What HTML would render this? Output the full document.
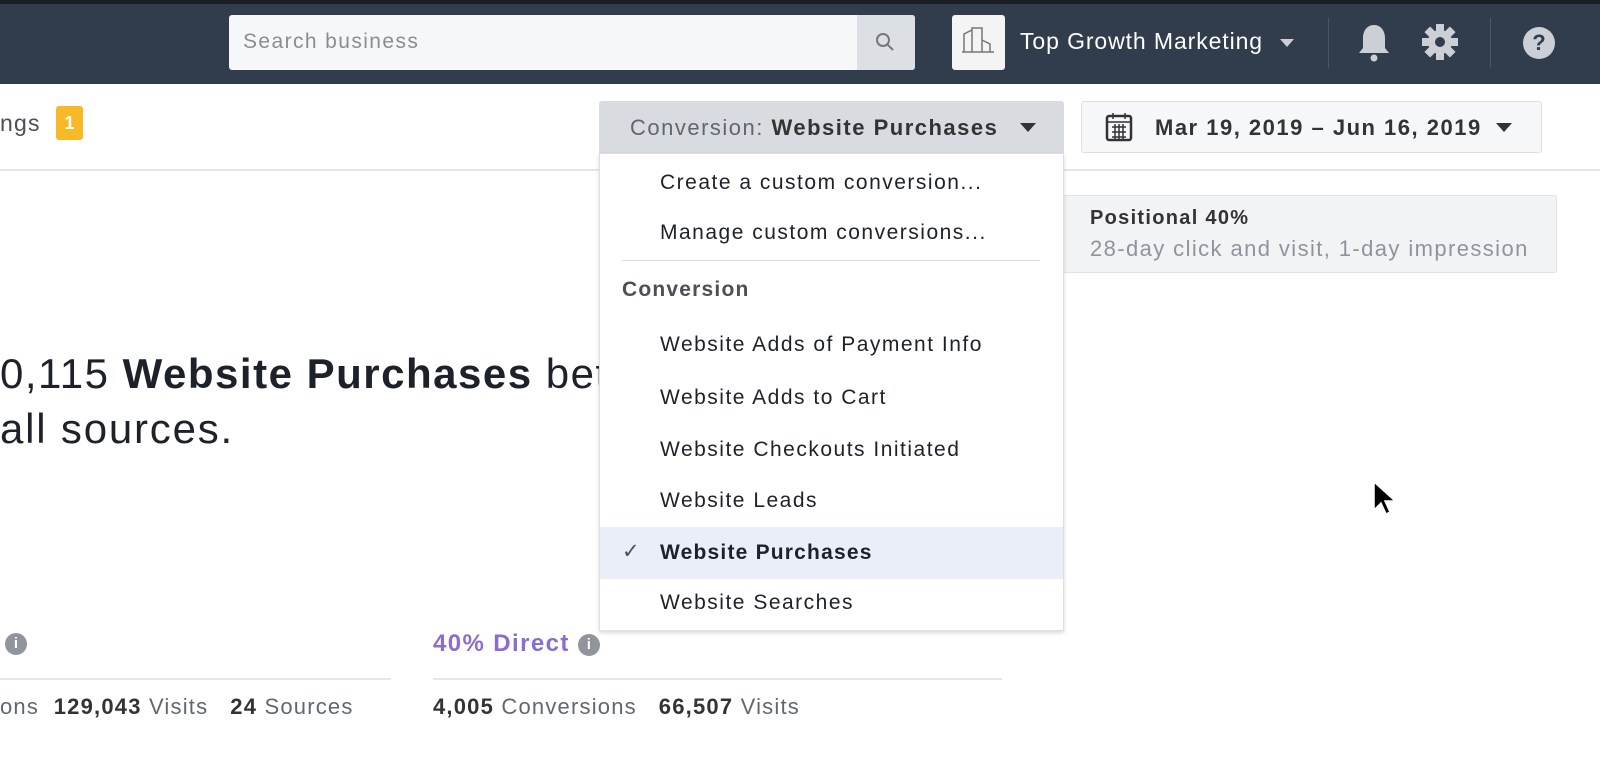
<!DOCTYPE html>
<html><head><style>
*{margin:0;padding:0;box-sizing:border-box}
body{width:1600px;height:781px;overflow:hidden;background:#fff;font-family:"Liberation Sans",sans-serif;position:relative;color:#1d2129;letter-spacing:1.2px}
.abs{position:absolute;white-space:nowrap}
.hdr{left:0;top:0;width:1600px;height:84px;background:#313c4c;border-top:4px solid #1a1f26}
.mi{position:absolute;left:60px;font-size:21px;color:#1d2129;white-space:nowrap;letter-spacing:1.5px}
.ic{display:inline-block;width:22px;height:22px;border-radius:50%;background:#90949c;color:#fff;font-size:15px;font-weight:bold;text-align:center;line-height:22px;letter-spacing:0;vertical-align:2px}
</style></head><body>
<div class="abs hdr"></div>
<div class="abs" style="left:229px;top:15px;width:686px;height:55px;background:#f6f7f9;border-radius:3px"></div>
<div class="abs" style="left:857px;top:15px;width:58px;height:55px;background:#dcdfe4;border-radius:0 3px 3px 0"></div>
<svg class="abs" style="left:874px;top:31px" width="22" height="22"><circle cx="9" cy="9" r="6" stroke="#777" stroke-width="2" fill="none"/><path d="M13 13l6 6" stroke="#777" stroke-width="2"/></svg>
<div class="abs" style="left:243px;top:30px;font-size:21px;color:#8a8d91;letter-spacing:1.4px">Search business</div>
<div class="abs" style="left:952px;top:15px;width:53px;height:55px;background:#f4f4f4;border-radius:3px"></div>
<svg class="abs" style="left:958px;top:22px" width="40" height="40"><path d="M6 30V12l8-4v22M14 30V6h10v24M24 18l8 4v8M4 30h32" stroke="#777" stroke-width="1.5" fill="none"/></svg>
<div class="abs" style="left:1020px;top:28px;font-size:23px;color:#fff;letter-spacing:0.9px">Top Growth Marketing</div>
<div class="abs" style="left:1280px;top:39px;border:7px solid transparent;border-top:8px solid #ccd0d6"></div>
<div class="abs" style="left:1328px;top:18px;width:1px;height:50px;background:#4a5566"></div>
<svg class="abs" style="left:1356px;top:22px" width="36" height="42"><path d="M18 3c-7 0-11 6-11 13v10l-4 5h30l-4-5V16C29 9 25 3 18 3z" fill="#ccd0d6"/><circle cx="18" cy="36" r="3.5" fill="#ccd0d6"/></svg>
<svg class="abs" style="left:1420px;top:22px" width="40" height="40"><g transform="translate(20 20)" fill="#ccd0d6"><circle r="12"/><g id="t"><rect x="-4" y="-18" width="8" height="8"/></g><use href="#t" transform="rotate(45)"/><use href="#t" transform="rotate(90)"/><use href="#t" transform="rotate(135)"/><use href="#t" transform="rotate(180)"/><use href="#t" transform="rotate(225)"/><use href="#t" transform="rotate(270)"/><use href="#t" transform="rotate(315)"/></g><circle cx="20" cy="20" r="5" fill="#313c4c"/></svg>
<div class="abs" style="left:1490px;top:18px;width:1px;height:50px;background:#4a5566"></div>
<div class="abs" style="left:1523px;top:27px;width:32px;height:32px;border-radius:50%;background:#ccd0d6;color:#313c4c;font-weight:bold;font-size:22px;text-align:center;line-height:32px;letter-spacing:0">?</div>

<div class="abs" style="left:0;top:110px;font-size:23px;color:#4b4f56">ngs</div>
<div class="abs" style="left:56px;top:106px;width:27px;height:34px;background:#f7b928;border-radius:3px;color:#fff;font-weight:bold;font-size:18px;text-align:center;line-height:34px;letter-spacing:0">1</div>
<div class="abs" style="left:0;top:169px;width:600px;height:2px;background:#e5e6e9"></div>
<div class="abs" style="left:1063px;top:169px;width:537px;height:2px;background:#e5e6e9"></div>

<div class="abs" style="left:1081px;top:101px;width:461px;height:52px;background:#f6f7f9;border:1px solid #dddfe2;border-radius:3px"></div>
<svg class="abs" style="left:1104px;top:111px" width="32" height="32"><rect x="3" y="5" width="24" height="24" rx="2" fill="none" stroke="#333" stroke-width="2.5"/><path d="M3 11h24M9 2v6M21 2v6M8 16h14M8 21h14M8 26h14M11 13v15M15 13v15M19 13v15" stroke="#333" stroke-width="1.5"/></svg>
<div class="abs" style="left:1155px;top:115px;font-size:22px;font-weight:bold;color:#333;letter-spacing:1.5px">Mar 19, 2019 – Jun 16, 2019</div>
<div class="abs" style="left:1496px;top:123px;border:8px solid transparent;border-top:9px solid #333"></div>

<div class="abs" style="left:1063px;top:195px;width:494px;height:78px;background:#f2f3f5;border:1px solid #e0e2e5;border-radius:3px"></div>
<div class="abs" style="left:1090px;top:207px;font-size:20px;font-weight:bold;color:#333;letter-spacing:1.3px">Positional 40%</div>
<div class="abs" style="left:1090px;top:236px;font-size:22px;color:#8d949e;letter-spacing:1.4px">28-day click and visit, 1-day impression</div>

<div class="abs" style="left:0;top:350px;font-size:42px;color:#1d2129;letter-spacing:1.5px">0,115 <b>Website Purchases</b> betw</div>
<div class="abs" style="left:0;top:405px;font-size:42px;color:#1d2129;letter-spacing:1.8px">all sources.</div>

<div class="abs" style="left:5px;top:633px"><span class="ic">i</span></div>
<div class="abs" style="left:0;top:678px;width:391px;height:2px;background:#e5e6e9"></div>
<div class="abs" style="left:0;top:694px;font-size:22px;color:#606770;letter-spacing:1.2px">ons&nbsp;&nbsp;<b style="color:#333">129,043</b> Visits&nbsp;&nbsp;&nbsp;<b style="color:#333">24</b> Sources</div>
<div class="abs" style="left:433px;top:630px;font-size:24px;color:#8b6ccf;font-weight:bold;letter-spacing:1.4px">40% Direct <span class="ic">i</span></div>
<div class="abs" style="left:433px;top:678px;width:569px;height:2px;background:#e5e6e9"></div>
<div class="abs" style="left:433px;top:694px;font-size:22px;color:#606770;letter-spacing:1.2px"><b style="color:#333">4,005</b> Conversions&nbsp;&nbsp;&nbsp;<b style="color:#333">66,507</b> Visits</div>

<div class="abs" style="left:599px;top:101px;width:465px;height:52px;background:#d8dbdf;border-radius:3px 3px 0 0"></div>
<div class="abs" style="left:630px;top:115px;font-size:22px;color:#606770;letter-spacing:1.5px">Conversion: <b style="color:#333">Website Purchases</b></div>
<div class="abs" style="left:1020px;top:123px;border:8px solid transparent;border-top:9px solid #333"></div>
<div class="abs" style="left:599px;top:153px;width:465px;height:478px;background:#fff;border:1px solid #dddfe2;box-shadow:0 2px 4px rgba(0,0,0,.15)">
<div class="mi" style="top:17px">Create a custom conversion...</div>
<div class="mi" style="top:67px">Manage custom conversions...</div>
<div style="position:absolute;left:22px;top:106px;width:418px;height:1px;background:#dddfe2"></div>
<div class="mi" style="left:22px;top:124px;font-weight:bold;color:#4b4f56;letter-spacing:1.2px">Conversion</div>
<div class="mi" style="top:179px">Website Adds of Payment Info</div>
<div class="mi" style="top:232px">Website Adds to Cart</div>
<div class="mi" style="top:284px">Website Checkouts Initiated</div>
<div class="mi" style="top:335px">Website Leads</div>
<div style="position:absolute;left:0;top:373px;width:463px;height:52px;background:#e9eef8"></div>
<div class="mi" style="left:22px;top:385px;color:#4b4f56">✓</div>
<div class="mi" style="top:387px;font-weight:bold;letter-spacing:1.2px">Website Purchases</div>
<div class="mi" style="top:437px">Website Searches</div>
</div>
<svg class="abs" style="left:1372px;top:480px" width="24" height="38"><path d="M2 2v28l7-7 5 11 4-2-5-11h10z" fill="#000" stroke="#fff" stroke-width="1.5"/></svg>
</body></html>
